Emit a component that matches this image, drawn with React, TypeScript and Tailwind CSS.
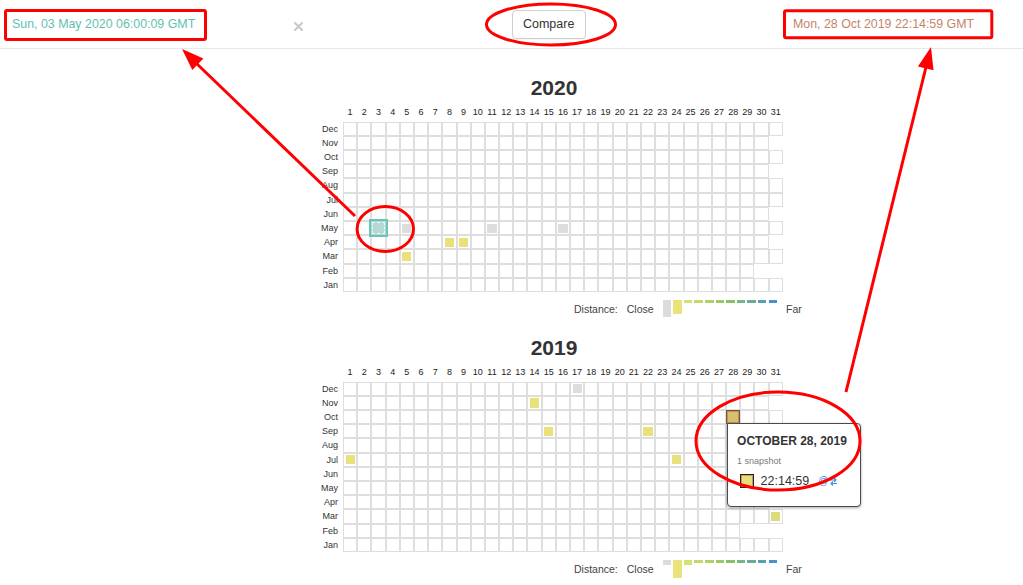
import React from "react";

const MONTHS: { label: string; num: number }[] = [
  { label: "Dec", num: 12 },
  { label: "Nov", num: 11 },
  { label: "Oct", num: 10 },
  { label: "Sep", num: 9 },
  { label: "Aug", num: 8 },
  { label: "Jul", num: 7 },
  { label: "Jun", num: 6 },
  { label: "May", num: 5 },
  { label: "Apr", num: 4 },
  { label: "Mar", num: 3 },
  { label: "Feb", num: 2 },
  { label: "Jan", num: 1 },
];

const DAYS = Array.from({ length: 31 }, (_, i) => i + 1);

type Mark = "gray" | "yellow" | "lime" | "teal" | "amber";

const MARKS: Record<string, Mark> = {
  "2020-5-3": "teal",
  "2020-5-5": "gray",
  "2020-5-11": "gray",
  "2020-5-16": "gray",
  "2020-4-8": "yellow",
  "2020-4-9": "yellow",
  "2020-3-5": "yellow",
  "2019-12-17": "gray",
  "2019-11-14": "yellow",
  "2019-10-28": "amber",
  "2019-9-15": "yellow",
  "2019-9-22": "yellow",
  "2019-7-1": "yellow",
  "2019-7-24": "yellow",
  "2019-3-31": "lime",
};

function daysIn(year: number, month: number) {
  return new Date(year, month, 0).getDate();
}

function Tooltip() {
  return (
    <div className="absolute left-0 top-full z-30 h-[84px] w-[134px] rounded-b-[4px] rounded-tr-[4px] border border-[#4a4a4a] bg-white pl-[9px] pt-[9px] shadow-[0_1px_3px_rgba(0,0,0,0.35)]">
      <div className="h-[16px] whitespace-nowrap text-[12px] font-bold leading-[16px] text-[#333]">
        OCTOBER 28, 2019
      </div>
      <div className="mt-[6px] h-[12px] text-[9px] leading-[12px] text-[#7a7a7a]">1 snapshot</div>
      <div className="mt-[6px] flex h-[16px] items-center">
        <div className="ml-[3px] h-[13.5px] w-[13.5px] border border-[#222] p-0">
          <div className="h-full w-full border border-[#d9935f] bg-[#e8df7a]" />
        </div>
        <span className="ml-[7px] text-[12.5px] leading-[16px] text-[#333]">22:14:59</span>
        <span className="ml-[9px] text-[10px] leading-[16px] text-[#3f8ee0]">@</span>
        <svg className="ml-[1px]" width="9" height="9" viewBox="0 0 9 9" fill="none" stroke="#3f8ee0" strokeWidth="1.1">
          <path d="M1 3h6M5 1l2 2-2 2" />
          <path d="M8 6.5H2M4 4.5l-2 2 2 2" />
        </svg>
      </div>
    </div>
  );
}

function Cell({ year, month, day }: { year: number; month: number; day: number }) {
  if (day > daysIn(year, month)) return <div />;
  const mark = MARKS[`${year}-${month}-${day}`];
  return (
    <div className={`relative border border-[#dedede] bg-white ${mark === "amber" ? "z-20" : ""} ${mark === "teal" ? "z-10" : ""}`}>
      {mark === "gray" && <div className="absolute inset-[1.5px] bg-[#dddddd]" />}
      {mark === "yellow" && <div className="absolute inset-[1.5px] bg-[#e9e27b]" />}
      {mark === "lime" && <div className="absolute inset-[1.5px] bg-[#dadc7a]" />}
      {mark === "teal" && (
        <div className="absolute -inset-[3px] border-2 border-[#6cc4b7] bg-[#b6d8d5]">
          <div className="absolute inset-[1px] border border-dashed border-white/80" />
        </div>
      )}
      {mark === "amber" && (
        <>
          <div className="absolute -inset-[1px] border border-[#6b5a48]">
            <div className="h-full w-full border border-[#d08a5a] bg-[#d6c16a]" />
          </div>
          <Tooltip />
        </>
      )}
    </div>
  );
}

type Bar = { cls: string };

const LEGEND_2020: Bar[] = [
  { cls: "h-[17px] bg-[#dcdcdc]" },
  { cls: "h-[14px] bg-[#eae27a]" },
  { cls: "h-[3px] bg-[#d7de72]" },
  { cls: "h-[3px] bg-[#c5d86c]" },
  { cls: "h-[3px] bg-[#b1d068]" },
  { cls: "h-[3px] bg-[#9cc866]" },
  { cls: "h-[3px] bg-[#88bf6e]" },
  { cls: "h-[3px] bg-[#76b586]" },
  { cls: "h-[3px] bg-[#68ab98]" },
  { cls: "h-[3px] bg-[#5a9fb0]" },
  { cls: "h-[3px] bg-[#4b90c6]" },
];

const LEGEND_2019: Bar[] = [
  { cls: "h-[5px] bg-[#dcdcdc]" },
  { cls: "h-[18px] bg-[#eae27a]" },
  { cls: "h-[5px] bg-[#d7de72]" },
  { cls: "h-[3px] bg-[#c5d86c]" },
  { cls: "h-[3px] bg-[#b1d068]" },
  { cls: "h-[3px] bg-[#9cc866]" },
  { cls: "h-[3px] bg-[#88bf6e]" },
  { cls: "h-[3px] bg-[#76b586]" },
  { cls: "h-[3px] bg-[#68ab98]" },
  { cls: "h-[3px] bg-[#5a9fb0]" },
  { cls: "h-[3px] bg-[#4b90c6]" },
];

function Legend({ bars }: { bars: Bar[] }) {
  return (
    <div className="ml-[256px] mt-[8px] flex h-[18px] items-start gap-[9px] text-[10.5px] leading-[18px] text-[#444]">
      <span>Distance:</span>
      <span>Close</span>
      <div className="flex items-start gap-[2.1px]">
        {bars.map((b, i) => (
          <div key={i} className={`w-[8.5px] ${b.cls}`} />
        ))}
      </div>
      <span>Far</span>
    </div>
  );
}

function YearCalendar({ year, bars, top }: { year: number; bars: Bar[]; top: string }) {
  return (
    <section className={`ml-[318px] ${top}`}>
      <h2 className="h-[24px] w-[472px] text-center text-[21px] font-bold leading-[24px] text-[#333]">{year}</h2>
      <div className="ml-[25px] mt-[5.7px] grid h-[12px] grid-cols-[repeat(31,14.2px)] text-center text-[9px] leading-[12px] text-[#222]">
        {DAYS.map((d) => (
          <span key={d}>{d}</span>
        ))}
      </div>
      <div className="mt-[4px]">
        {MONTHS.map((m) => (
          <div key={m.label} className="flex h-[14.2px]">
            <div className="w-[20px] text-right text-[9px] leading-[14.2px] text-[#333]">{m.label}</div>
            <div className="ml-[5px] grid grid-cols-[repeat(31,14.2px)] auto-rows-[14.2px]">
              {DAYS.map((d) => (
                <Cell key={d} year={year} month={m.num} day={d} />
              ))}
            </div>
          </div>
        ))}
      </div>
      <Legend bars={bars} />
    </section>
  );
}

function Header() {
  return (
    <header className="flex h-[49px] items-center border-b border-[#e8e8e8]">
      <div className="w-[292px] pl-[12px] text-[12.4px] text-[#5fbfb2]">Sun, 03 May 2020 06:00:09 GMT</div>
      <div className="flex w-[12px] justify-center pt-[4px]">
        <svg width="9" height="9" viewBox="0 0 9 9" stroke="#c6c6c6" strokeWidth="1.8" strokeLinecap="round">
          <path d="M1 1l7 7M8 1L1 8" />
        </svg>
      </div>
      <button className="ml-[207.7px] h-[29px] w-[74px] rounded-[4px] border border-[#cfcfcf] bg-white text-[12.5px] text-[#333] shadow-[0_1px_1px_rgba(0,0,0,0.04)]">
        Compare
      </button>
      <div className="ml-[207.3px] whitespace-nowrap text-[12.4px] text-[#c5846a]">Mon, 28 Oct 2019 22:14:59 GMT</div>
    </header>
  );
}

function Annotations() {
  return (
    <svg className="pointer-events-none absolute left-0 top-0 z-50" width="1023" height="585" viewBox="0 0 1023 585">
      <g fill="none" stroke="#ff0000" strokeWidth="3">
        <rect x="5.5" y="10.5" width="200" height="29" rx="1.5" />
        <rect x="784.5" y="10.8" width="207.3" height="27" rx="1.5" />
        <ellipse cx="551" cy="24.5" rx="64.5" ry="20.5" />
        <ellipse cx="385.3" cy="229" rx="28.2" ry="22.5" />
        <ellipse cx="778" cy="441" rx="82" ry="49" />
        <line x1="355" y1="216" x2="196" y2="63" />
        <line x1="846" y1="392" x2="926" y2="67" />
      </g>
      <polygon fill="#ff0000" points="182,49 192.3,70.1 203.4,58.5" />
      <polygon fill="#ff0000" points="931,47 933.5,70.2 917.9,66.4" />
    </svg>
  );
}

export default function App() {
  return (
    <div className="relative h-[585px] w-[1023px] overflow-hidden bg-white font-['Liberation_Sans',Arial,sans-serif]">
      <Header />
      <YearCalendar year={2020} bars={LEGEND_2020} top="mt-[27px]" />
      <YearCalendar year={2019} bars={LEGEND_2019} top="mt-[18px]" />
      <Annotations />
    </div>
  );
}
